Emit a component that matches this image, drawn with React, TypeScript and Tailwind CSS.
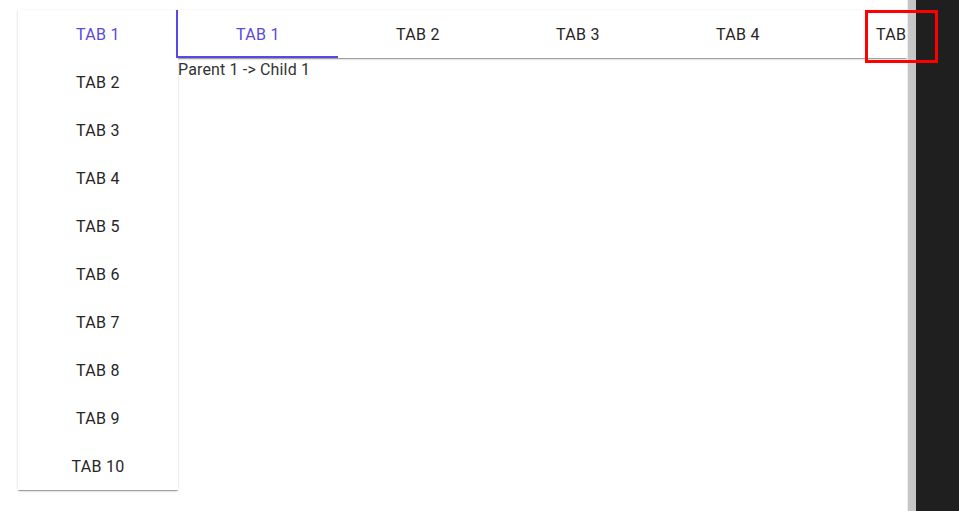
import React from "react";

const shadow = "shadow-[0_2px_1px_-1px_rgba(0,0,0,0.2),0_1px_1px_0_rgba(0,0,0,0.14),0_1px_3px_0_rgba(0,0,0,0.12)]";

export default function App() {
  const vtabs = Array.from({ length: 10 }, (_, i) => `TAB ${i + 1}`);
  const htabs = ["TAB 1", "TAB 2", "TAB 3", "TAB 4", "TAB 5"];
  return (
    <div
      className="relative flex h-[511px] w-[959px] overflow-hidden bg-white"
      style={{ fontFamily: "Roboto, 'Liberation Sans', sans-serif" }}
    >
      <div className="flex min-w-0 flex-1 items-start overflow-hidden pl-[18px] pt-[10px]">
        <div className={`flex w-[160px] shrink-0 flex-col bg-white ${shadow}`}>
          {vtabs.map((t, i) => (
            <div
              key={t}
              className={`relative flex h-[48px] items-center justify-center pt-[2px] text-[16px] uppercase tracking-[0.3px] ${
                i === 0 ? "text-[#574ae2]" : "text-[#262626]"
              }`}
            >
              {t}
              {i === 0 && <span className="absolute right-0 top-0 h-[48px] w-[2px] bg-[#574ae2]" />}
            </div>
          ))}
        </div>
        <div className="flex min-w-0 flex-1 flex-col">
          <div className={`flex h-[48px] bg-white ${shadow}`}>
            {htabs.map((t, i) => (
              <div
                key={t}
                className={`relative flex h-[48px] w-[160px] shrink-0 items-center justify-center pt-[2px] text-[16px] uppercase tracking-[0.3px] ${
                  i === 0 ? "text-[#574ae2]" : "text-[#262626]"
                }`}
              >
                {t}
                {i === 0 && <span className="absolute bottom-0 left-0 h-[2px] w-[160px] bg-[#574ae2]" />}
              </div>
            ))}
          </div>
          <div className="text-[16px] leading-[24px] tracking-[0.15px] text-[#333333]">Parent 1 -&gt; Child 1</div>
        </div>
      </div>
      <div className="h-full w-[9px] shrink-0 border-l border-[#ececec] bg-[#c6c6c6]" />
      <div className="h-full w-[43px] shrink-0 bg-[#1f1f1f]" />
      <div className="absolute left-[865px] top-[10px] h-[53px] w-[73px] border-[3px] border-[#ff0000]" />
    </div>
  );
}
